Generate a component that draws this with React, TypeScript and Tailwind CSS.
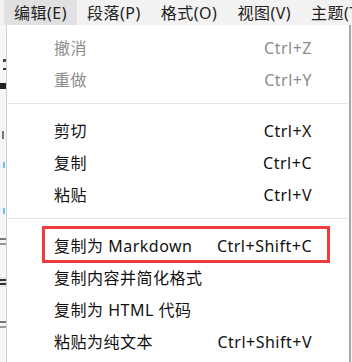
const font = { fontFamily: '"Noto Sans", "Noto Sans CJK SC", sans-serif' };

type Item = { label: string; keys?: string; disabled?: boolean; boxed?: boolean };

const groups: Item[][] = [
  [
    { label: "撤消", keys: "Ctrl+Z", disabled: true },
    { label: "重做", keys: "Ctrl+Y", disabled: true },
  ],
  [
    { label: "剪切", keys: "Ctrl+X" },
    { label: "复制", keys: "Ctrl+C" },
    { label: "粘贴", keys: "Ctrl+V" },
  ],
  [
    { label: "复制为 Markdown", keys: "Ctrl+Shift+C", boxed: true },
    { label: "复制内容并简化格式" },
    { label: "复制为 HTML 代码" },
    { label: "粘贴为纯文本", keys: "Ctrl+Shift+V" },
  ],
];

const menus = ["编辑(E)", "段落(P)", "格式(O)", "视图(V)", "主题(T)"];

function Row({ item }: { item: Item }) {
  return (
    <div
      className={`relative flex h-8 items-center justify-between pl-[47px] pr-[37px] ${
        item.disabled ? "text-[#8c8c8c]" : "text-[#111]"
      }`}
    >
      <span>{item.label}</span>
      {item.keys && <span>{item.keys}</span>}
      {/* red annotation box drawn over the row */}
      {item.boxed && (
        <div className="absolute -top-[4px] -bottom-[1px] left-[35px] w-[288px] border-[3px] border-[#f33b3b]" />
      )}
    </div>
  );
}

export default function App() {
  return (
    <div
      className="flex h-[362px] w-[352px] flex-col overflow-hidden bg-[#f6f6f6] text-[16px] tracking-[0.5px]"
      style={font}
    >
      {/* menu bar */}
      <div className="flex h-[25px] shrink-0 items-center bg-[#f2f2f2] pl-[4px] text-[#222]">
        {menus.map((m, i) => (
          <div
            key={m}
            className={`flex h-full items-center whitespace-nowrap px-[10px] ${i === 0 ? "bg-[#e1e1e1]" : ""}`}
          >
            {m}
          </div>
        ))}
      </div>

      <div className="flex flex-1">
        {/* sliver of the document behind the menu */}
        <div className="flex w-[6px] shrink-0 flex-col items-end">
          <div className="mt-[34px] h-[3px] w-[3px] bg-[#444]" />
          <div className="mt-[6px] h-[2px] w-[3px] bg-[#333]" />
          <div className="mt-[13px] h-[6px] w-[6px] bg-[#222]" />
          <div className="mr-[2px] mt-[42px] h-[8px] w-[2px] bg-[#777]" />
          <div className="mr-[1px] mt-[23px] h-[6px] w-[2px] bg-[#7bbcf0]" />
          <div className="mr-[1px] mt-[40px] h-[6px] w-[2px] bg-[#7bbcf0]" />
          <div className="mt-[24px] h-[2px] w-[6px] bg-[#777]" />
          <div className="mt-[3px] h-[2px] w-[6px] bg-[#999]" />
          <div className="mt-[32px] flex h-[10px] w-[6px] flex-col justify-center gap-[2px] bg-[#e8e8e8]">
            <div className="h-[2px] bg-[#333]" />
            <div className="h-[2px] bg-[#333]" />
          </div>
          <div className="mt-[34px] h-[2px] w-[6px] bg-[#777]" />
          <div className="mt-[3px] h-[2px] w-[6px] bg-[#999]" />
        </div>

        {/* dropdown */}
        <div className="w-[345px] shrink-0 border-l border-r-2 border-l-[#cfcfcf] border-r-[#a8a8a8] bg-white pt-[7px]">
          {groups.map((g, gi) => (
            <div key={gi}>
              {gi > 0 && <div className="mx-[1px] mb-[11px] mt-[7px] h-px bg-[#e3e3e3]" />}
              {g.map((item) => (
                <Row key={item.label} item={item} />
              ))}
            </div>
          ))}
        </div>
      </div>
    </div>
  );
}
